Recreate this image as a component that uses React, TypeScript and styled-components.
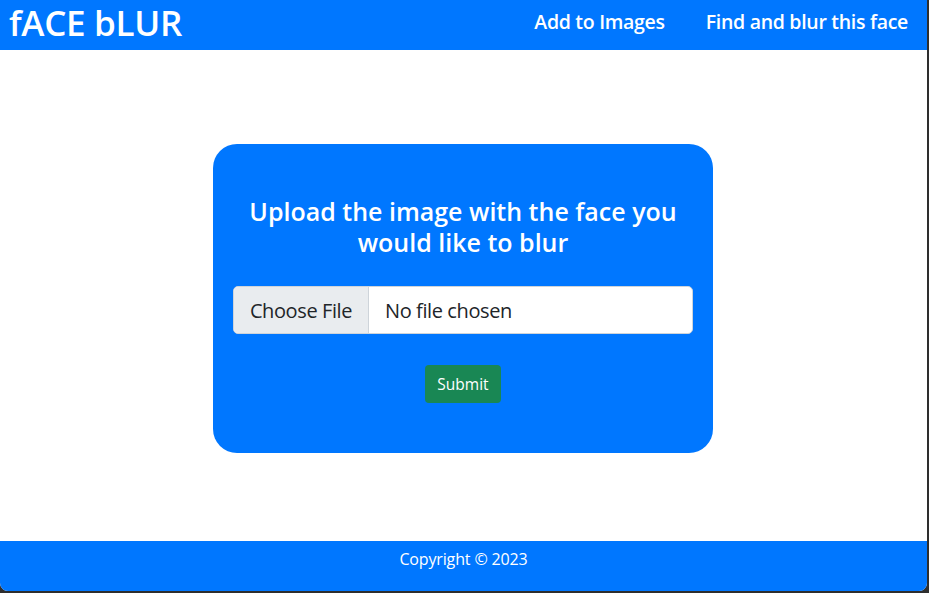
import React from "react";
import styled, { createGlobalStyle } from "styled-components";

const Global = createGlobalStyle`
  html, body { margin: 0; padding: 0; background: #2e2e2e; }
  body { font-family: "Open Sans", "Noto Sans", sans-serif; }
  * { box-sizing: border-box; }
`;

const Frame = styled.div`
  width: 927px;
  height: 591px;
  background: #ffffff;
  display: flex;
  flex-direction: column;
  border-radius: 0 0 8px 8px;
  overflow: hidden;
`;

const NavBar = styled.nav`
  height: 50px;
  background: #0077ff;
  display: flex;
  align-items: center;
  justify-content: space-between;
  padding: 0 19px 0 9px;
`;

const Brand = styled.div`
  color: #fff;
  font-size: 35px;
  font-weight: 600;
  letter-spacing: -0.3px;
  line-height: 1;
  margin-top: -6px;
`;

const NavLinks = styled.div`
  display: flex;
  gap: 41px;
  margin-top: -7px;
`;

const NavLink = styled.a`
  color: #fff;
  font-size: 19.5px;
  font-weight: 600;
  text-decoration: none;
  letter-spacing: -0.3px;
`;

const Main = styled.main`
  flex: 1;
  display: flex;
  align-items: center;
  justify-content: center;
  padding-right: 1px;
`;

const Card = styled.section`
  width: 500px;
  height: 309px;
  background: #0077ff;
  border-radius: 24px;
  padding: 52px 20px 0;
  display: flex;
  flex-direction: column;
  align-items: center;
  margin-top: 6px;
`;

const Heading = styled.h2`
  margin: 0;
  color: #fff;
  font-size: 25px;
  font-weight: 600;
  line-height: 31px;
  text-align: center;
`;

const FileField = styled.label`
  margin-top: 28px;
  width: 460px;
  height: 48px;
  display: flex;
  background: #fff;
  border: 1px solid #ced4da;
  border-radius: 5px;
  overflow: hidden;
  cursor: pointer;
  font-size: 20px;
  color: #212529;
  input { display: none; }
`;

const ChooseButton = styled.span`
  width: 135px;
  background: #e9ecef;
  border-right: 1px solid #ced4da;
  display: flex;
  align-items: center;
  justify-content: center;
  letter-spacing: -0.4px;
`;

const FileName = styled.span`
  display: flex;
  align-items: center;
  padding-left: 16px;
  letter-spacing: -0.4px;
`;

const SubmitButton = styled.button`
  margin-top: 31px;
  width: 76px;
  height: 38px;
  background: #198754;
  color: #fff;
  border: none;
  border-radius: 4px;
  font-family: inherit;
  font-size: 15.5px;
  cursor: pointer;
`;

const Footer = styled.footer`
  height: 50px;
  background: #0077ff;
  color: #fff;
  display: flex;
  justify-content: center;
  padding-top: 7px;
  font-size: 16px;
  letter-spacing: -0.15px;
`;

export default function App() {
  return (
    <>
      <Global />
      <Frame>
        <NavBar>
          <Brand>fACE bLUR</Brand>
          <NavLinks>
            <NavLink href="#">Add to Images</NavLink>
            <NavLink href="#">Find and blur this face</NavLink>
          </NavLinks>
        </NavBar>
        <Main>
          <Card>
            <Heading>
              Upload the image with the face you
              <br />
              would like to blur
            </Heading>
            <FileField>
              <input type="file" />
              <ChooseButton>Choose File</ChooseButton>
              <FileName>No file chosen</FileName>
            </FileField>
            <SubmitButton type="button">Submit</SubmitButton>
          </Card>
        </Main>
        <Footer>Copyright © 2023</Footer>
      </Frame>
    </>
  );
}
